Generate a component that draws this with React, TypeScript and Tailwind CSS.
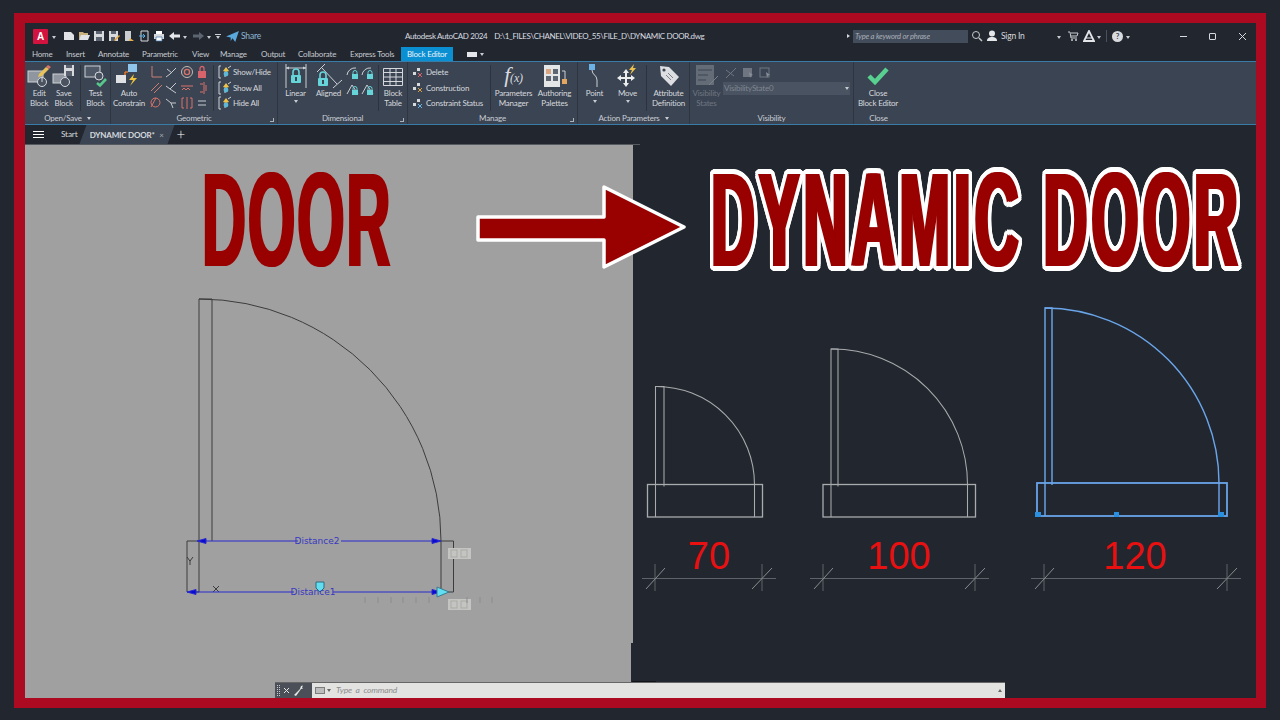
import React from "react";

const S = ({ w = 16, h = 16, children }: { w?: number; h?: number; children: React.ReactNode }) => (
  <svg width={w} height={h} viewBox={`0 0 ${w} ${h}`} className="shrink-0" fill="none">{children}</svg>
);
const Caret = () => <span className="inline-block w-0 h-0 border-x-[2.5px] border-x-transparent border-t-[3px] border-t-[#c8ccd2]" />;

const Qa = {
  New: () => <S w={12} h={12}><path d="M1 2h7l3 3v5H1z" fill="#e0e2e5" /></S>,
  Open: () => <S w={12} h={12}><path d="M1 2h4l1 1h4v2H4L1 10z" fill="#c9b27c" /><path d="M3 5h9l-2 5H1z" fill="#e0e2e5" /></S>,
  Save: () => <S w={12} h={12}><path d="M1 1h10v10H1z" fill="#d7d9dc" /><path d="M3 1h6v3H3zM3 7h6v4H3z" fill="#59616e" /></S>,
  SaveAs: () => <S w={12} h={12}><path d="M1 1h9v10H1z" fill="#d7d9dc" /><path d="M3 1h5v3H3zM3 7h4v4H3z" fill="#59616e" /><path d="M6 10l5-5 1 1-5 5z" fill="#e8a33a" /></S>,
  Plot: () => <S w={12} h={12}><path d="M2 1h6v10H2z" fill="#c9ccd0" /><path d="M7 8l4 3H6z" fill="#e8b04a" /></S>,
  Export: () => <S w={12} h={12}><path d="M3 1h7v10H3z" stroke="#d7d9dc" /><path d="M1 6h6M5 4l2 2-2 2" stroke="#58b2e8" /></S>,
  Print: () => <S w={12} h={12}><path d="M3 1h6v3H3z" fill="#fff" /><path d="M1 4h10v5H1z" fill="#d7d9dc" /><path d="M3 7h6v4H3z" fill="#fff" stroke="#3a6ea5" strokeWidth=".7" /></S>,
};

const EditBlock = () => (
  <S w={24} h={24}><rect x="1" y="7" width="15" height="11" fill="#8f96a0" stroke="#cfd2d6" /><circle cx="15" cy="18" r="4.5" fill="#4b5361" stroke="#d5d8dc" /><path d="M15 18v-4" stroke="#d5d8dc" /><path d="M12 10l7-7 3 2-7 7-4 1z" fill="#e9c15a" /><path d="M19 3l2-2 3 2-2 2z" fill="#d8736a" /></S>
);
const SaveBlock = () => (
  <S w={24} h={24}><rect x="1" y="10" width="13" height="9" fill="#8f96a0" stroke="#cfd2d6" /><circle cx="13" cy="18" r="4.5" fill="#4b5361" stroke="#d5d8dc" /><rect x="12" y="1" width="10" height="11" fill="#d7d9dc" /><rect x="14" y="1" width="6" height="3" fill="#59616e" /><rect x="14" y="7" width="6" height="5" fill="#59616e" /></S>
);
const TestBlock = () => (
  <S w={24} h={24}><rect x="1" y="2" width="15" height="11" fill="#4f5866" stroke="#cfd2d6" /><circle cx="15" cy="12" r="4" fill="#4b5361" stroke="#d5d8dc" /><path d="M13 19l3 2.500 6-6.500" stroke="#57c78a" strokeWidth="2.600" /></S>
);
const AutoC = () => (
  <S w={28} h={26}><rect x="13" y="1" width="9" height="8" fill="#8fc5ea" /><path d="M8 17h2M10 9h3M10 12V9" stroke="#d9742b" strokeWidth="1.600" /><rect x="1" y="12" width="10" height="8" fill="#dfe1e4" /><path d="M19 11l-5 6h4l-3 6 7-8h-4z" fill="#f1c33a" /></S>
);
const Lock = () => (
  <S w={14} h={14}><rect x="3" y="6" width="8" height="7" fill="#d8636a" /><path d="M5 6V3.500a2 2 0 014 0V6" stroke="#d8636a" strokeWidth="1.300" /></S>
);
const Geo = ({ d, c = "#c7cad0" }: { d: string; c?: string }) => <S w={14} h={14}><path d={d} stroke={c} /></S>;
const Target = () => <S w={14} h={14}><circle cx="7" cy="7" r="5.500" stroke="#c9b9b4" /><circle cx="7" cy="7" r="2.600" stroke="#d8736a" strokeWidth="1.400" /></S>;
const Bracket = () => (
  <S w={14} h={14}><path d="M3 1H1v12h2" stroke="#cfd2d6" /><path d="M8 2L5 6l3 1 3-1z" fill="#eec24a" /><path d="M7 12V7" stroke="#cfd2d6" /><circle cx="8" cy="9" r="2.400" fill="#5fb7d8" /><path d="M10 3l3-2" stroke="#cfd2d6" /></S>
);
const BigLock = () => <g><rect x="8" y="12" width="10" height="8" rx="1" fill="#66d5da" /><path d="M10 12V9a3 3 0 016 0v3" stroke="#66d5da" strokeWidth="1.600" /><rect x="12" y="14" width="2" height="4" fill="#3b4453" /></g>;
const Linear = () => (
  <S w={26} h={26}><path d="M3 1v24M23 1v24" stroke="#ccd0d5" /><path d="M3 5h20" stroke="#ccd0d5" /><path d="M3 5l3-1.500v3zM23 5l-3-1.500v3z" fill="#ccd0d5" /><BigLock /></S>
);
const Aligned = () => (
  <S w={28} h={26}><path d="M2 9l8-8M18 25l9-8M7 5l15 16" stroke="#ccd0d5" /><g transform="translate(-5 3)"><BigLock /></g></S>
);
const SmallDim = ({ arc }: { arc?: boolean }) => (
  <S w={14} h={14}>{arc ? <path d="M1 9a8 8 0 019-7" stroke="#ccd0d5" /> : <path d="M1 12l5-9 6 9" stroke="#ccd0d5" />}<rect x="6" y="8" width="6" height="5" fill="#66d5da" /><path d="M7 8V6.500a2 2 0 014 0V8" stroke="#66d5da" /></S>
);
const Table = () => (
  <S w={22} h={22}><path d="M1.500 3.500h19v17h-19z" stroke="#d4d7db" /><path d="M1.500 7.500h19M1.500 12h19M1.500 16.500h19M8 3.500v17M14 3.500v17" stroke="#d4d7db" /></S>
);
const Fx = () => (
  <span className="text-[#d9dbdf] text-[22px] italic leading-[24px] [font-family:'Liberation_Serif',serif]">f<span className="text-[12px]">(x)</span></span>
);
const Palettes = () => (
  <S w={24} h={24}><rect x="1" y="1" width="16" height="22" fill="#e4e5e7" /><path d="M3 5h5v5H3zM10 5h5v5h-5zM3 12h5v5H3zM10 12h5v5h-5z" fill="#5d6573" /><rect x="3" y="5" width="5" height="5" fill="#d7a581" /><path d="M19 7h3v8" stroke="#ccd0d5" /><rect x="19" y="15" width="5" height="5" fill="#e2a65f" /></S>
);
const Point = () => (
  <S w={14} h={24}><rect x="1" y="0" width="6" height="6" fill="#6cb2e6" /><path d="M4 6c0 5 5 5 5 10v7" stroke="#ccd0d5" /></S>
);
const Move = () => (
  <S w={22} h={24}><path d="M9 5l-3 4h2v4H4v-2l-4 3 4 3v-2h4v4H6l3 4 3-4h-2v-4h4v2l4-3-4-3v2h-4V9h2z" fill="#eceded" /><path d="M17 0l-5 6h3l-2 5 6-7h-3z" fill="#eec24a" /></S>
);
const Tag = () => (
  <S w={22} h={24}><path d="M2 2l9 1 10 10-8 9L3 12z" fill="#dcdee1" /><circle cx="6" cy="6" r="1.600" fill="#3b4453" /><path d="M8 11l5 5M10 9l5 5" stroke="#7b818b" /></S>
);
const VisStates = () => (
  <S w={24} h={24}><rect x="1" y="1" width="18" height="20" fill="#646c78" /><path d="M3 6h14M3 11h10M3 16h8" stroke="#495160" strokeWidth="1.500" /><path d="M14 21l9-9" stroke="#7c828c" /></S>
);
const Check = () => <S w={22} h={18}><path d="M2 9l6 6L20 2" stroke="#58d08f" strokeWidth="4.500" /></S>;

const Big = ({ w, icon, l1, l2, caret, dim, h = 26 }: { w: number; icon: React.ReactNode; l1: string; l2?: string; caret?: boolean; dim?: boolean; h?: number }) => (
  <div className={`shrink-0 flex flex-col items-center ${dim ? "text-[#6f7681]" : "text-[#d6d9dd]"}`} style={{ width: w }}>
    <div className="flex items-center justify-center" style={{ height: h }}>{icon}</div>
    <div className="text-center leading-[9.500px] whitespace-nowrap">{l1}</div>
    {l2 && <div className="text-center leading-[9.500px] whitespace-nowrap">{l2}</div>}
    {caret && <div className="h-[9px] flex items-start pt-[1px]"><Caret /></div>}
  </div>
);
const Sep = () => <div className="w-px h-[46px] bg-[#2d333d] shrink-0 mt-[2px]" />;
const Panel = ({ w, title, arrow, corner, last, children }: { w: number; title: string; arrow?: boolean; corner?: boolean; last?: boolean; children: React.ReactNode }) => (
  <div className={`shrink-0 flex flex-col ${last ? "" : "border-r border-[#2f3641]"}`} style={{ width: w }}>
    <div className="h-[50px] flex pt-[1px]">{children}</div>
    <div className="h-[12px] relative flex items-center justify-center gap-[5px] text-[#c9cdd3]">
      <span>{title}</span>{arrow && <Caret />}
      {corner && <span className="absolute right-[3px] bottom-[2px] w-[4px] h-[4px] border-r border-b border-[#aeb3ba]" />}
    </div>
  </div>
);

const tabs = [["Home", 34], ["Insert", 32], ["Annotate", 44], ["Parametric", 50], ["View", 28], ["Manage", 41], ["Output", 37], ["Collaborate", 52], ["Express Tools", 52]] as const;

const Door = ({ l, r, t, b, y, leaf, arcX, c, w }: { l: number; r: number; t: number; b: number; y: number; leaf: number; arcX: number; c: string; w: number }) => (
  <g stroke={c} strokeWidth={w} fill="none">
    <rect x={l} y={y} width={r - l} height={b - y} />
    <path d={`M${arcX} ${b}V${t}H${leaf}V${y + 2}`} strokeWidth={w * 0.8} />
    <path d={`M${arcX} ${t}A${y - t} ${y - t} 0 0 1 ${r - (arcX - l)} ${y}V${b}`} strokeWidth={w * 0.8} />
  </g>
);
const Dim = ({ x0, x1, a, b }: { x0: number; x1: number; a: number; b: number }) => (
  <g stroke="#5e6369" strokeWidth="1">
    <path d={`M${x0} 578.500H${x1}M${a} 564V591M${b} 564V591`} />
    <path d={`M${a - 9} 589L${a + 10} 568M${b - 10} 589L${b + 10} 568`} stroke="#8a8d90" />
  </g>
);
const ParamBox = ({ y }: { y: number }) => (
  <g>
    <rect x="448" y={y} width="23" height="11" fill="#c4c4c2" />
    <rect x="451" y={y + 2} width="6" height="7" stroke="#a9a9a4" fill="none" />
    <rect x="461" y={y + 2} width="6" height="7" stroke="#a9a9a4" fill="none" />
  </g>
);

export default function App() {
  const big = "[font-family:'Liberation_Sans',sans-serif] font-bold text-[#990000] origin-left whitespace-nowrap text-[134px] leading-[120px] scale-x-[0.455]";
  return (
    <div className="w-[1280px] h-[720px] bg-[#22272f] overflow-hidden pt-[13px] pl-[14px] [font-family:'Lato',sans-serif] text-[8px] tracking-[-0.2px]">
      <div className="w-[1252px] h-[695px] border-[10px] border-[#ab0a20] border-l-[11px] flex flex-col bg-[#22272f] relative">
        {/* title bar */}
        <div className="h-[24px] flex items-center shrink-0 text-[#d6d9dd] relative pt-[2px]">
          <div className="ml-[8px] w-[15px] h-[15px] bg-[#d2123f] flex items-center justify-center text-white font-bold text-[10px] [font-family:'Liberation_Sans',sans-serif] rounded-[1px]">A</div>
          <span className="ml-[4px]"><Caret /></span>
          <div className="ml-[7px] flex items-center gap-[3px]">
            <Qa.New /><Qa.Open /><Qa.Save /><Qa.SaveAs /><Qa.Plot /><Qa.Export /><Qa.Print />
          </div>
          <svg width="12" height="10" viewBox="0 0 12 10" className="ml-[4px]"><path d="M0 5l5-4v2.500h6v3H5V9z" fill="#e4e6e9" /></svg>
          <span className="ml-[2px]"><Caret /></span>
          <svg width="12" height="10" viewBox="0 0 12 10" className="ml-[5px]"><path d="M12 5L7 1v2.500H1v3h6V9z" fill="#5c6470" /></svg>
          <span className="ml-[3px]"><Caret /></span>
          <span className="ml-[4px] w-[6px] h-[5px] border-t border-[#ccd0d5] flex items-end justify-center"><Caret /></span>
          <svg width="13" height="11" viewBox="0 0 14 12" className="ml-[5px]"><path d="M0 6L14 0l-4 12-3-4-2 3V7z" fill="#5aa9dc" /></svg>
          <span className="ml-[2px] text-[8.500px] text-[#8fb6d4]">Share</span>
          <div className="absolute left-[380px] text-[8px] tracking-[-0.35px] whitespace-pre text-[#d9dce0]">Autodesk AutoCAD 2024    D:\1_FILES\CHANEL\VIDEO_55\FILE_D\DYNAMIC DOOR.dwg</div>
          <div className="ml-auto flex items-center">
            <span className="w-0 h-0 border-y-[2.500px] border-y-transparent border-l-[3px] border-l-[#d6d9dd] mr-[3px]" />
            <div className="w-[115px] h-[13px] bg-[#434c5b] italic text-[7.600px] text-[#aab0b9] px-[2px] leading-[13px]">Type a keyword or phrase</div>
            <svg width="12" height="12" viewBox="0 0 12 12" className="ml-[3px]"><circle cx="5" cy="5" r="3.500" stroke="#c6c9ce" fill="none" /><path d="M8 8l3 3" stroke="#c6c9ce" strokeWidth="1.500" /></svg>
            <svg width="12" height="12" viewBox="0 0 12 12" className="ml-[3px]"><circle cx="6" cy="3.500" r="3" fill="#e4e6e9" /><path d="M1 11c0-3 2-4 5-4s5 1 5 4z" fill="#e4e6e9" /></svg>
            <span className="ml-[3px] w-[24px] text-[8.500px]">Sign In</span>
            <span className="ml-[32px]"><Caret /></span>
            <svg width="12" height="12" viewBox="0 0 12 12" className="ml-[6px]"><path d="M1 2h2l1 6h6M4 3h7l-1 3H4" stroke="#c8ccd2" fill="none" /><circle cx="5" cy="10" r="1" fill="#c8ccd2" /><circle cx="9" cy="10" r="1" fill="#c8ccd2" /></svg>
            <svg width="12" height="12" viewBox="0 0 12 12" className="ml-[4px]"><path d="M6 1L1 11h10z" stroke="#e4e6e9" strokeWidth="1.800" fill="none" /><path d="M3 8h6" stroke="#e4e6e9" /></svg>
            <span className="ml-[2px]"><Caret /></span>
            <div className="w-px h-[12px] bg-[#4a515d] ml-[5px]" />
            <div className="ml-[5px] w-[11px] h-[11px] rounded-full bg-[#d8dadd] text-[#3b4453] text-[8px] font-bold text-center leading-[11px]">?</div>
            <span className="ml-[3px]"><Caret /></span>
            <div className="ml-[50px] w-[7px] h-px bg-[#d6d9dd]" />
            <div className="ml-[22px] w-[7px] h-[7px] border border-[#d6d9dd] rounded-[1px]" />
            <svg width="9" height="9" viewBox="0 0 9 9" className="ml-[22px] mr-[9px]"><path d="M1 1l7 7M8 1L1 8" stroke="#d6d9dd" /></svg>
          </div>
        </div>
        {/* ribbon tabs */}
        <div className="h-[14px] flex items-end shrink-0 pl-[7px] text-[#c6cad0] relative">
          {tabs.map(([t, w]) => <div key={t} className="h-[14px] leading-[15px] whitespace-nowrap" style={{ width: w }}>{t}</div>)}
          <div className="h-[14px] w-[52px] bg-[#0a8fd2] text-[#e9f3fa] text-center leading-[14px] -ml-[1px]">Block Editor</div>
          <div className="ml-[14px] flex items-center gap-[3px] h-[14px]"><span className="w-[10px] h-[5px] bg-[#e4e6e9]" /><Caret /></div>
        </div>
        {/* ribbon */}
        <div className="h-[64px] shrink-0 bg-[#3b4453] border-y border-[#3a7ca8] flex text-[#d6d9dd]">
          <Panel w={86} title="Open/Save" arrow>
            <div className="w-[2px]" />
            <Big w={25} icon={<EditBlock />} l1="Edit" l2="Block" />
            <Big w={24} icon={<SaveBlock />} l1="Save" l2="Block" />
            <div className="w-[5px]" /><Sep />
            <Big w={29} icon={<TestBlock />} l1="Test" l2="Block" />
          </Panel>
          <Panel w={167} title="Geometric" corner>
            <Big w={36} icon={<AutoC />} l1="Auto" l2="Constrain" />
            <div className="ml-[1px] w-[62px] grid grid-cols-4 gap-y-[1.500px] mt-[2px] h-[44px] justify-items-center">
              <Geo d="M3 1v11h10" c="#c97f72" /><Geo d="M2 12l4-3 6-6M3 4l5 4" /><Target /><Lock />
              <Geo d="M2 10l8-8M5 12l8-8" c="#c97f72" /><Geo d="M12 2L6 8l6 4M6 8L2 5" /><Geo d="M1 5h12M2 9l2-2 2 2 2-2 2 2" c="#d8736a" /><Geo d="M9 1v12M5 3h3M5 11h3M11 4v6" c="#d8736a" />
              <Geo d="M7 2a4.500 4.500 0 11-1 0zM2 11l5-9" c="#d8736a" /><Geo d="M2 3l5 4 2 5M7 7h5" /><Geo d="M4 2H2v10h2M10 2h2v10h-2M7 1v12" c="#d8736a" /><Geo d="M3 5h8M3 9h8" />
            </div>
            <div className="ml-[3px]"><Sep /></div>
            <div className="ml-[4px] flex flex-col gap-[1.500px] mt-[2px]">
              {["Show/Hide", "Show All", "Hide All"].map(t => (
                <div key={t} className="h-[14px] flex items-center gap-[1px] whitespace-nowrap"><Bracket /><span>{t}</span></div>
              ))}
            </div>
          </Panel>
          <Panel w={130} title="Dimensional" corner>
            <Big w={35} icon={<Linear />} l1="Linear" caret />
            <Big w={31} icon={<Aligned />} l1="Aligned" />
            <div className="ml-[2px] mt-[3px] grid grid-cols-2 gap-x-[2px] gap-y-[2px] h-[30px]">
              <SmallDim arc /><SmallDim arc /><SmallDim /><SmallDim />
            </div>
            <div className="ml-[4px]"><Sep /></div>
            <Big w={28} icon={<Table />} l1="Block" l2="Table" />
          </Panel>
          <Panel w={170} title="Manage" corner>
            <div className="pl-[4px] w-[82px] flex flex-col gap-[1.500px] mt-[2px]">
              {[["Delete", "#d8636a"], ["Construction", "#d8a24a"], ["Constraint Status", "#6cb2e6"]].map(([t, c]) => (
                <div key={t} className="h-[14px] flex items-center gap-[3px] whitespace-nowrap">
                  <svg width="11" height="11" viewBox="0 0 11 11"><path d="M1 5h3v3H1zM5 1h3v3H5z" fill="#d7d9dc" /><path d="M6 6l4 4M10 6l-4 4" stroke={c} /></svg>
                  <span>{t}</span>
                </div>
              ))}
            </div>
            <Sep />
            <Big w={45} icon={<Fx />} l1="Parameters" l2="Manager" />
            <Big w={37} icon={<Palettes />} l1="Authoring" l2="Palettes" />
          </Panel>
          <Panel w={112} title="Action Parameters" arrow>
            <Big w={33} icon={<Point />} l1="Point" caret />
            <Big w={33} icon={<Move />} l1="Move" caret />
            <div className="ml-[2px]"><Sep /></div>
            <Big w={43} icon={<Tag />} l1="Attribute" l2="Definition" />
          </Panel>
          <Panel w={164} title="Visibility">
            <Big w={33} icon={<VisStates />} l1="Visibility" l2="States" dim />
            <div className="mt-[2px]">
              <div className="h-[15px] flex items-center gap-[5px] pl-[2px]">
                <svg width="12" height="12" viewBox="0 0 12 12"><path d="M1 11L11 1M1 3l8 6" stroke="#6f7681" /></svg>
                <svg width="12" height="12" viewBox="0 0 12 12"><rect x="1" y="1" width="9" height="9" fill="#6f7681" /><path d="M7 5l4 3-2 .5L8 11z" fill="#8a909a" /></svg>
                <svg width="12" height="12" viewBox="0 0 12 12"><rect x="1" y="1" width="9" height="9" stroke="#6f7681" fill="none" /><path d="M7 5l4 3-2 .5L8 11z" fill="#8a909a" /></svg>
              </div>
              <div className="mt-[2px] w-[127px] h-[13px] bg-[#4a5362] flex items-center justify-between px-[1px] text-[#7f8691] leading-[13px]">
                <span>VisibilityState0</span><Caret />
              </div>
            </div>
          </Panel>
          <Panel w={49} title="Close" last>
            <Big w={48} icon={<Check />} l1="Close" l2="Block Editor" />
          </Panel>
          <div className="flex-1" />
        </div>
        {/* document tabs */}
        <div className="h-[19px] shrink-0 flex items-center text-[#d6d9dd]">
          <div className="ml-[8px] w-[11px] flex flex-col gap-[2px]"><span className="h-px bg-white" /><span className="h-px bg-white" /><span className="h-px bg-white" /></div>
          <span className="ml-[17px] text-[8.300px]">Start</span>
          <div className="ml-[6px] h-[19px] w-[88px] bg-[#3b4453] -skew-x-[20deg] flex items-center justify-center">
            <span className="skew-x-[20deg] font-bold whitespace-nowrap">DYNAMIC DOOR* <span className="ml-[3px] text-[#a7acb4] font-normal">×</span></span>
          </div>
          <span className="ml-[5px] text-[15px] leading-none text-white font-light">+</span>
        </div>
        {/* canvas */}
        <div className="flex-1 flex relative overflow-hidden">
          <div className="w-[608px] bg-[#a0a0a0] shrink-0" />
          <div className="flex-1 bg-[#22272f]" />
          <div className="absolute left-0 top-0 w-[615px] h-px bg-[#555a60]" />
          <div className="absolute left-[606px] top-[499px] w-[2px] h-[39px] bg-[#22272f]" />
          <div className="absolute left-[607px] top-[537px] w-[24px] h-px bg-[#111418]" />
          <svg className="absolute inset-0" width="1231" height="554" viewBox="25 144 1231 554">
            <path d="M478 217H604V187L684 227L604 267V240H478Z" fill="#990000" stroke="#fff" strokeWidth="3.500" strokeLinejoin="round" />
            <g stroke="#3c3c3c" fill="none" strokeWidth="1">
              <path d="M199 592V299H212V541" />
              <path d="M199 299A242 242 0 0 1 441 541V592" />
              <path d="M199 541H187V592H199M441 541H453.500V592H441" />
              <path d="M190 560v5M187 557l3 4 3-4M213 586l6 6M219 586l-6 6" />
            </g>
            <g stroke="#2a2ad0" fill="#0b0bd0" strokeWidth="1">
              <path d="M199 541H298M341 541H441M187 592H294M333 592H441" fill="none" />
              <path d="M197 541l9-2.500v5zM441 541l-9-2.500v5zM187 592l9-2.500v5zM441 592l-9-2.500v5z" />
            </g>
            <ParamBox y={548} /><ParamBox y={599} />
            <path d="M316 582h8v6l-4 4-4-4z" fill="#62def0" stroke="#2a6a80" />
            <path d="M437 587l12 5-12 5z" fill="#62def0" stroke="#3a7a90" />
            <path d="M365 597v6M378 597v6M391 597v6M403 597v6M416 597v6M429 597v6M467 597v6M480 597v6M492 597v6" stroke="#8c8c8c" />
            <Door l={647.500} r={762.500} y={484.500} b={517} leaf={664} arcX={655.500} t={386.500} c="#a9abad" w={1.300} />
            <Door l={823} r={975.500} y={484.500} b={517} leaf={838} arcX={831} t={349} c="#a9abad" w={1.300} />
            <Door l={1037} r={1227} y={483} b={516} leaf={1052} arcX={1045} t={308} c="#6aa5ea" w={1.800} />
            <path d="M1035 512h6v5h-6zM1114 512h5v5h-5zM1218 512h6v5h-6z" fill="#2b8fe0" />
            <Dim x0={642} x1={776} a={655} b={762} />
            <Dim x0={810} x1={989} a={823} b={975} />
            <Dim x0={1031} x1={1241} a={1044} b={1227} />
          </svg>
          <div className="absolute left-[262px] top-[391px] w-[60px] text-center text-[#3838c0] text-[9px] tracking-normal [font-family:'DejaVu_Sans',sans-serif] leading-[12px]">Distance2</div>
          <div className="absolute left-[258px] top-[442px] w-[60px] text-center text-[#3838c0] text-[9px] tracking-normal [font-family:'DejaVu_Sans',sans-serif] leading-[12px]">Distance1</div>

          <div className={`absolute left-[177px] top-[16px] tracking-[4px] ${big} [text-shadow:3px_0_0_#990000,-3px_0_0_#990000]`}>DOOR</div>
          <div className={`absolute left-[686px] top-[16px] tracking-[8.500px] ${big} [text-shadow:4px_0_0_#990000,-4px_0_0_#990000,11px_0_0_#fff,-11px_0_0_#fff,0_5px_0_#fff,0_-5px_0_#fff,11px_2px_0_#fff,-11px_2px_0_#fff,11px_-2px_0_#fff,-11px_-2px_0_#fff,10px_3px_0_#fff,-10px_3px_0_#fff,10px_-3px_0_#fff,-10px_-3px_0_#fff,8px_4px_0_#fff,-8px_4px_0_#fff,8px_-4px_0_#fff,-8px_-4px_0_#fff,5px_5px_0_#fff,-5px_5px_0_#fff,5px_-5px_0_#fff,-5px_-5px_0_#fff,3px_5px_0_#fff,-3px_5px_0_#fff,3px_-5px_0_#fff,-3px_-5px_0_#fff]`}>DYNAMIC DOOR</div>

          <div className="absolute left-[617px] top-[392px] w-[134px] text-center text-[#e81010] text-[38px] tracking-normal leading-[40px] [font-family:'Liberation_Sans',sans-serif]">70</div>
          <div className="absolute left-[784px] top-[392px] w-[180px] text-center text-[#e81010] text-[38px] tracking-normal leading-[40px] [font-family:'Liberation_Sans',sans-serif]">100</div>
          <div className="absolute left-[1020px] top-[392px] w-[180px] text-center text-[#e81010] text-[38px] tracking-normal leading-[40px] [font-family:'Liberation_Sans',sans-serif]">120</div>
          <div className="absolute left-[250px] bottom-0 w-[730px] h-[16px] flex border-t border-[#666]">
            <div className="w-[37px] bg-[#4a4f58] flex items-center gap-[3px] pl-[2px]">
              <span className="w-[3px] h-[11px] border-x border-dotted border-[#c5c8cc]" />
              <svg width="7" height="7" viewBox="0 0 7 7"><path d="M1 1l5 5M6 1L1 6" stroke="#e8e8e8" /></svg>
              <svg width="11" height="11" viewBox="0 0 11 11"><path d="M1 10l6-6 1-3 2-.5-1 2 1 1-2 .5-5 7z" fill="#e8e8e8" /></svg>
            </div>
            <div className="flex-1 bg-[#e3e3e1] flex items-center pl-[3px] text-[#8d8d8d] italic text-[8.500px] [word-spacing:2px]">
              <span className="w-[10px] h-[7px] border border-[#7c7c7c] bg-[#bdbdbd]" />
              <span className="ml-[2px] w-0 h-0 border-x-[2px] border-x-transparent border-t-[3px] border-t-[#666]" />
              <span className="ml-[5px]">Type a command</span>
              <span className="ml-auto mr-[3px] w-0 h-0 border-x-[2px] border-x-transparent border-b-[3px] border-b-[#666]" />
            </div>
          </div>
        </div>
      </div>
    </div>
  );
}
